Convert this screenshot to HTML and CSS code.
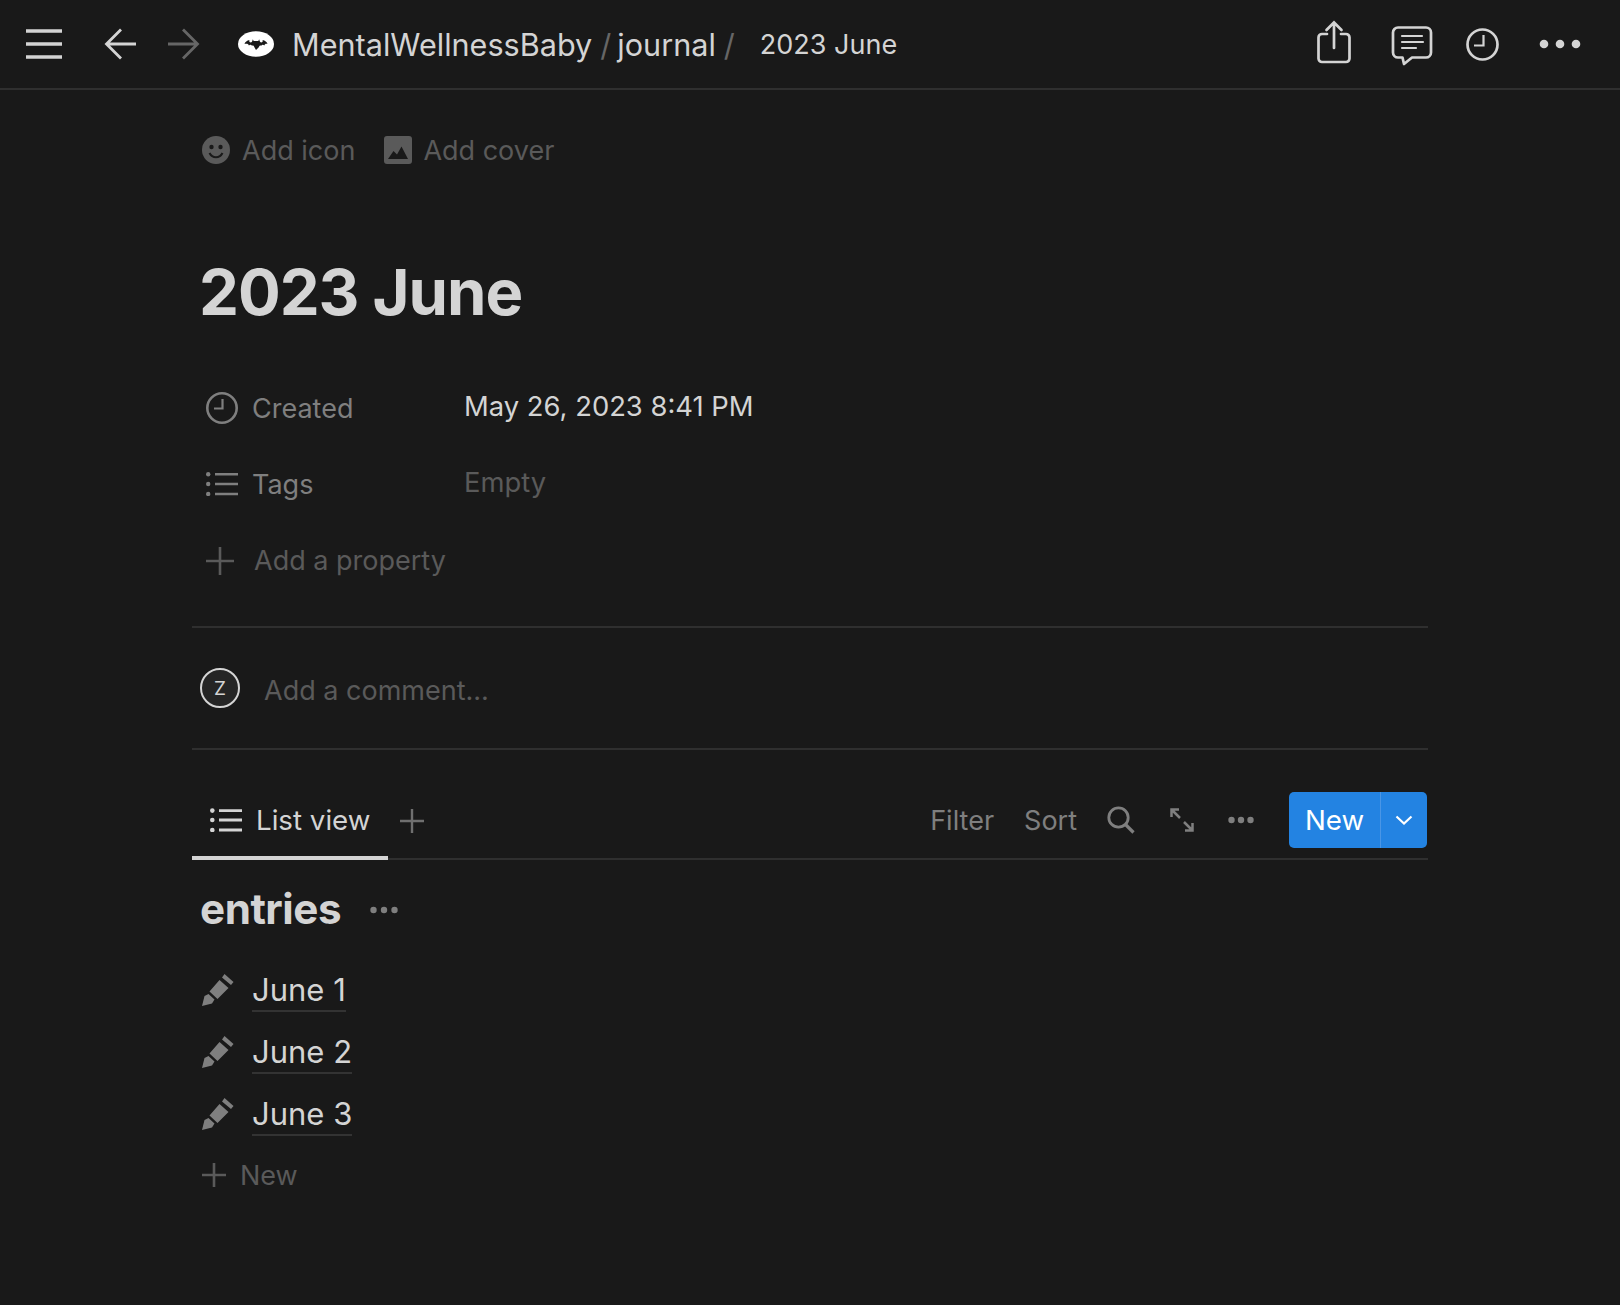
FILE: index.html
```html
<!DOCTYPE html>
<html lang="en">
<head>
<meta charset="utf-8">
<title>2023 June</title>
<link rel="stylesheet" href="styles.css">
</head>
<body>
<header class="topbar">
  <div class="nav">
    <svg class="ic-menu" width="36" height="30" viewBox="0 0 36 30"><path d="M0 2h36M0 15h36M0 28h36" stroke="#d4d4d4" stroke-width="3.600"/></svg>
    <svg class="ic-back" width="33" height="32" viewBox="0 0 33 32"><path d="M32 16H3M17 1.500 2.500 16 17 30.500" fill="none" stroke="#d4d4d4" stroke-width="2.800"/></svg>
    <svg class="ic-fwd" width="33" height="32" viewBox="0 0 33 32"><path d="M1 16h29M16 1.500 30.500 16 16 30.500" fill="none" stroke="#666" stroke-width="2.800"/></svg>
    <svg class="ic-bat" width="36" height="26" viewBox="0 0 36 26"><ellipse cx="18" cy="13" rx="18" ry="12.700" fill="#fff"/><path d="M6.500 13c.5-2 2.500-3.500 5-4-.7 1.500.2 2.800 2 2.300.7-.6 1-1.600 1.300-3l.9 1.700h4.600l.9-1.700c.3 1.400.6 2.400 1.300 3 1.800.5 2.700-.8 2-2.300 2.500.5 4.500 2 5 4-1.300-.6-2.800-.2-3.200 1.600-.9-1.200-2.300-1.200-3.100.2-.9-.7-1.900-.2-2.400 1.500L18 19l-1.600-2.700c-.5-1.700-1.500-2.200-2.400-1.500-.8-1.400-2.200-1.400-3.100-.2-.4-1.800-1.900-2.200-4.400-1.600z" fill="#191919"/></svg>
    <nav class="crumbs">
      <span class="crumb">MentalWellnessBaby</span><span class="sep">/</span><span class="crumb">journal</span><span class="sep">/</span><span class="crumb-current">2023 June</span>
    </nav>
  </div>
  <div class="actions">
    <svg class="ic-share" width="34" height="44" viewBox="0 0 34 44"><path d="M10 14H5a3.500 3.500 0 0 0-3.500 3.500v21A3.500 3.500 0 0 0 5 42h24a3.500 3.500 0 0 0 3.500-3.500v-21A3.500 3.500 0 0 0 29 14h-5M17 28V3M9.500 10 17 2.500 24.500 10" fill="none" stroke="#d4d4d4" stroke-width="2.700" stroke-linecap="round"/></svg>
    <svg class="ic-chat" width="42" height="40" viewBox="0 0 42 40"><path d="M7 1.500h28a5 5 0 0 1 5 5v20a5 5 0 0 1-5 5H21l-8 6.500-1.500-6.500H7a5 5 0 0 1-5-5v-20a5 5 0 0 1 5-5z" fill="none" stroke="#d4d4d4" stroke-width="2.700" stroke-linejoin="round"/><path d="M11 10h20M11 16h21M11 22h14" stroke="#d4d4d4" stroke-width="2.200" stroke-linecap="round"/></svg>
    <svg class="ic-hist" width="33" height="33" viewBox="0 0 33 33"><circle cx="16.500" cy="16.500" r="15" fill="none" stroke="#d4d4d4" stroke-width="2.700"/><path d="M17.500 7v10.500H8" fill="none" stroke="#d4d4d4" stroke-width="2.200"/></svg>
    <svg class="ic-more" width="42" height="10" viewBox="0 0 42 10"><circle cx="5" cy="5" r="4.300" fill="#d4d4d4"/><circle cx="21" cy="5" r="4.300" fill="#d4d4d4"/><circle cx="37" cy="5" r="4.300" fill="#d4d4d4"/></svg>
  </div>
</header>

<main class="page">
  <div class="page-tools">
    <span class="tool"><svg width="28" height="28" viewBox="0 0 28 28"><circle cx="14" cy="14" r="14" fill="#5a5a5a"/><circle cx="9.500" cy="11" r="2.200" fill="#191919"/><circle cx="18.500" cy="11" r="2.200" fill="#191919"/><path d="M7.500 17c1.500 3 3.800 4.200 6.500 4.200s5-1.200 6.500-4.200" fill="none" stroke="#191919" stroke-width="2"/></svg>Add icon</span>
    <span class="tool tool-cover"><svg width="28" height="28" viewBox="0 0 28 28"><rect width="28" height="28" rx="3" fill="#5a5a5a"/><path d="M4 23l5.500-8 3.500 3.500 4.500-8L24 23z" fill="#191919"/></svg>Add cover</span>
  </div>

  <h1 class="title">2023 June</h1>

  <section class="props">
    <div class="prop">
      <div class="prop-name"><svg width="32" height="32" viewBox="0 0 32 32"><circle cx="16" cy="16" r="14.700" fill="none" stroke="#7f7f7f" stroke-width="2.600"/><path d="M16.500 7v9.500H8" fill="none" stroke="#7f7f7f" stroke-width="2.200"/></svg><span>Created</span></div>
      <div class="prop-value">May 26, 2023 8:41 PM</div>
    </div>
    <div class="prop">
      <div class="prop-name"><svg width="32" height="24" viewBox="0 0 32 24"><g fill="#7f7f7f"><circle cx="2.200" cy="2.200" r="2.200"/><circle cx="2.200" cy="12" r="2.200"/><circle cx="2.200" cy="22" r="2.200"/></g><path d="M9 2.200h23M9 12h23M9 22h23" stroke="#7f7f7f" stroke-width="2.600"/></svg><span>Tags</span></div>
      <div class="prop-value empty">Empty</div>
    </div>
    <div class="prop add-prop">
      <div class="prop-name"><svg width="28" height="28" viewBox="0 0 28 28"><path d="M14 0v28M0 14h28" stroke="#5a5a5a" stroke-width="2.600"/></svg><span>Add a property</span></div>
    </div>
  </section>

  <section class="comment">
    <span class="avatar">Z</span>
    <span class="comment-text">Add a comment...</span>
  </section>

  <section class="db-bar">
    <div class="tabs">
      <div class="tab"><svg width="32" height="24" viewBox="0 0 32 24"><g fill="#d4d4d4"><circle cx="2.300" cy="2.600" r="2.300"/><circle cx="2.300" cy="12" r="2.300"/><circle cx="2.300" cy="22" r="2.300"/></g><path d="M9 2.600h23M9 12h23M9 22h23" stroke="#d4d4d4" stroke-width="2.800"/></svg>List view</div>
      <svg class="tab-add" width="24" height="24" viewBox="0 0 24 24"><path d="M12 0v24M0 12h24" stroke="#6f6f6f" stroke-width="2.400"/></svg>
    </div>
    <div class="db-actions">
      <span class="db-link">Filter</span>
      <span class="db-link db-sort">Sort</span>
      <svg class="ic-search" width="28" height="28" viewBox="0 0 28 28"><circle cx="11.500" cy="11.500" r="9.700" fill="none" stroke="#7f7f7f" stroke-width="2.800"/><path d="M18.500 18.500 26.500 26.500" stroke="#7f7f7f" stroke-width="3.200"/></svg>
      <svg class="ic-expand" width="24" height="24" viewBox="0 0 24 24"><path d="M1.500 9V1.500H9M1.500 1.500 10 10M22.500 15v7.500H15M22.500 22.500 14 14" fill="none" stroke="#7f7f7f" stroke-width="2.500"/></svg>
      <svg class="ic-dots" width="26" height="8" viewBox="0 0 26 8"><circle cx="3.500" cy="4" r="3.200" fill="#7f7f7f"/><circle cx="13" cy="4" r="3.200" fill="#7f7f7f"/><circle cx="22.500" cy="4" r="3.200" fill="#7f7f7f"/></svg>
      <div class="new-btn"><span class="new-label">New</span><span class="new-caret"><svg width="18" height="10" viewBox="0 0 18 10"><path d="M1.500 1.500 9 8.500l7.500-7" fill="none" stroke="#fff" stroke-width="2.200"/></svg></span></div>
    </div>
  </section>

  <section class="entries">
    <div class="entries-head"><h2>entries</h2><svg width="28" height="8" viewBox="0 0 28 8"><circle cx="3.500" cy="4" r="3.200" fill="#7f7f7f"/><circle cx="14" cy="4" r="3.200" fill="#7f7f7f"/><circle cx="24.500" cy="4" r="3.200" fill="#7f7f7f"/></svg></div>
    <div class="entry entry-first"><svg width="32" height="32" viewBox="0 0 32 32"><path d="M0 32l2.500-10L6.500 20l6 5.500L10 29.500zM7.500 17.500 17.500 6l9 8L15.500 25zM20 3.500 22.500 0 31.500 8 29 11z" fill="#7f7f7f"/></svg><span class="entry-link">June 1</span></div>
    <div class="entry"><svg width="32" height="32" viewBox="0 0 32 32"><path d="M0 32l2.500-10L6.500 20l6 5.500L10 29.500zM7.500 17.500 17.500 6l9 8L15.500 25zM20 3.500 22.500 0 31.500 8 29 11z" fill="#7f7f7f"/></svg><span class="entry-link">June 2</span></div>
    <div class="entry"><svg width="32" height="32" viewBox="0 0 32 32"><path d="M0 32l2.500-10L6.500 20l6 5.500L10 29.500zM7.500 17.500 17.500 6l9 8L15.500 25zM20 3.500 22.500 0 31.500 8 29 11z" fill="#7f7f7f"/></svg><span class="entry-link">June 3</span></div>
    <div class="entry-new"><svg width="24" height="24" viewBox="0 0 24 24"><path d="M12 0v24M0 12h24" stroke="#5a5a5a" stroke-width="2.600"/></svg>New</div>
  </section>
</main>
</body>
</html>
```

FILE: styles.css
```css
* { box-sizing: border-box; }
html, body { margin: 0; height: 100%; }
body {
  background: #191919;
  color: #d4d4d4;
  font-family: Inter, "Liberation Sans", sans-serif;
  min-height: 1305px;
  overflow: hidden;
}
svg { flex: none; display: block; }

.topbar {
  height: 90px;
  border-bottom: 2px solid #2f2f2f;
  display: flex;
  align-items: center;
  justify-content: space-between;
  padding: 0 39px 0 26px;
}
.nav { display: flex; align-items: center; }
.ic-menu { margin-right: 42px; }
.ic-back { margin-right: 30px; }
.ic-fwd { margin-right: 38px; }
.ic-bat { margin-right: 18px; }
.crumbs { display: flex; align-items: center; font-size: 30.6px; color: #d4d4d4; }
.sep { color: #666; margin: 0 6px 0 8px; }
.crumb-current { font-size: 27px; margin-left: 19px; }

.actions { display: flex; align-items: center; }
.actions .ic-share { margin-top: -4px; }
.actions .ic-chat { margin: 4px 0 0 40px; }
.actions .ic-hist { margin-left: 33px; }
.actions .ic-more { margin-left: 40px; }

.page { padding: 0 192px; }

.page-tools { display: flex; align-items: center; gap: 29px; padding-left: 10px; height: 120px; }
.tool { display: flex; align-items: center; gap: 12px; font-size: 27px; color: #5a5a5a; }
.tool-cover { gap: 11px; }

.title { margin: 44px 0 0 7px; font-size: 63.4px; line-height: 76px; font-weight: 700; color: #d4d4d4; letter-spacing: -1px; }

.props { padding: 40px 0 28px 14px; border-bottom: 2px solid #2f2f2f; }
.prop { display: flex; align-items: center; height: 76px; }
.prop-name { display: flex; align-items: center; gap: 14px; width: 258px; font-size: 27px; color: #7f7f7f; }
.prop-value { font-size: 27.4px; color: #d4d4d4; margin-top: -4px; }
.prop-value.empty { color: #5a5a5a; }
.add-prop .prop-name { color: #5a5a5a; gap: 20px; width: auto; }
.add-prop svg { margin-top: 2px; }

.comment { display: flex; align-items: center; gap: 24px; height: 122px; padding-left: 8px; border-bottom: 2px solid #2f2f2f; }
.avatar { width: 40px; height: 40px; border-radius: 50%; border: 2px solid #d4d4d4; background: #252525; display: flex; align-items: center; justify-content: center; font-size: 19px; color: #d4d4d4; }
.comment-text { font-size: 27px; color: #5a5a5a; margin-top: 4px; }

.db-bar { display: flex; justify-content: space-between; align-items: flex-end; height: 110px; border-bottom: 2px solid #2f2f2f; }
.tabs { display: flex; align-items: center; height: 108px; }
.tab { display: flex; align-items: flex-end; gap: 14px; height: 110px; width: 196px; padding: 0 0 19px 18px; border-bottom: 4px solid #d4d4d4; margin-top: 2px; font-size: 27.7px; line-height: 34px; color: #d4d4d4; }
.tab svg { margin-bottom: 5px; }
.tab-add { margin: 34px 0 0 12px; }

.db-actions { display: flex; align-items: center; padding: 0 1px 10px 0; }
.db-link { font-size: 27px; color: #7f7f7f; margin-right: 30px; }
.db-sort { margin-right: 30px; }
.ic-search { margin-right: 35px; }
.ic-expand { margin-right: 34px; }
.ic-dots { margin-right: 35px; }
.new-btn { display: flex; align-items: stretch; height: 56px; width: 138px; background: #2383e2; border-radius: 5px; color: #fff; font-size: 27.7px; }
.new-label { display: flex; align-items: center; justify-content: center; width: 92px; border-right: 1px solid #4a96e6; }
.new-caret { display: flex; align-items: center; justify-content: center; flex: 1; }

.entries { padding: 19px 0 0 8px; }
.entries-head { display: flex; align-items: center; gap: 29px; height: 58px; }
.entries-head h2 { margin: 0; font-size: 42.2px; font-weight: 700; color: #d4d4d4; letter-spacing: -0.5px; }
.entries-head svg { margin-top: 3px; }
.entry { display: flex; align-items: center; gap: 18px; height: 62px; padding-left: 2px; }
.entry svg { margin-top: -2px; }
.entry-first { margin-top: 23px; }
.entry-link { font-size: 31px; color: #d4d4d4; border-bottom: 2px solid #333; line-height: 40px; }
.entry-new { display: flex; align-items: center; gap: 14px; height: 58px; padding-left: 2px; font-size: 27px; color: #5a5a5a; }
```
